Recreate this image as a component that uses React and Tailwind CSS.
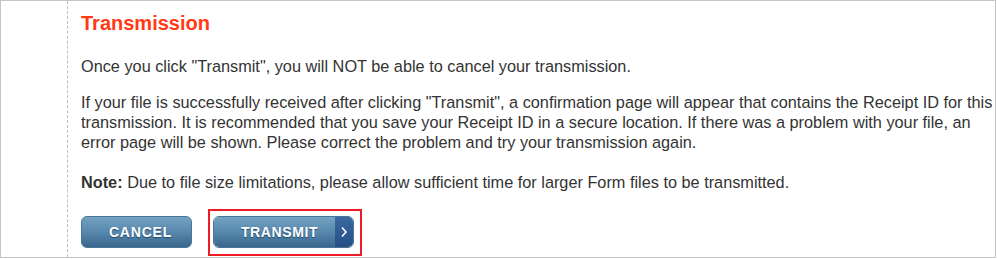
import React from "react";

function Chevron() {
  return (
    <svg width="8" height="12" viewBox="0 0 8 12" aria-hidden="true">
      <polyline points="2,1.5 6,6 2,10.5" fill="none" stroke="white" strokeWidth="1.6" />
    </svg>
  );
}

export default function App() {
  return (
    <div className="w-[997px] h-[259px] bg-white font-['Liberation_Sans',Arial,sans-serif]">
      <div className="flex w-[996px] h-[258px] border border-[#c4c4c4] overflow-hidden">
        <div className="w-[67px] shrink-0 border-r border-dashed border-[#bdbdbd]" />
        <div className="flex-1 pl-[13px] pt-[10px] text-[16.3px] leading-[20px] text-[#333333] whitespace-nowrap">
          <h2 className="text-[20px] leading-[24px] font-bold text-[#ff3a14]">Transmission</h2>

          <p className="mt-[21px]">
            Once you click "Transmit", you will NOT be able to cancel your transmission.
          </p>

          <p className="mt-[16px]">
            If your file is successfully received after clicking "Transmit", a confirmation page will appear that contains the Receipt ID for this
            <br />
            transmission. It is recommended that you save your Receipt ID in a secure location. If there was a problem with your file, an
            <br />
            error page will be shown. Please correct the problem and try your transmission again.
          </p>

          <p className="mt-[20px]">
            <span className="font-bold">Note:</span> Due to file size limitations, please allow sufficient time for larger Form files to be transmitted.
          </p>

          <div className="flex items-start mt-[17px]">
            <button className="mt-[7px] w-[111px] h-[32px] pl-[8px] rounded-[6px] border border-[#4a7598] bg-gradient-to-b from-[#74a3c0] via-[#5788ad] to-[#3a668e] text-white font-bold text-[14px] tracking-[0.8px] [text-shadow:0_1px_1px_#23476a]">
              CANCEL
            </button>

            <div className="ml-[16px] border-2 border-[#ee1c25] pl-[3px] pr-[6px] pt-[5px] pb-[6px]">
              <button className="flex w-[141px] h-[32px] rounded-[6px] overflow-hidden border border-[#4a7598] text-white font-bold text-[14px] tracking-[0.6px]">
                <span className="flex-1 flex items-center justify-center pl-[10px] bg-gradient-to-b from-[#74a3c0] via-[#5788ad] to-[#3a668e] [text-shadow:0_1px_1px_#23476a]">
                  TRANSMIT
                </span>
                <span className="w-[18px] flex items-center justify-center bg-gradient-to-b from-[#3a68a0] to-[#274f86]">
                  <Chevron />
                </span>
              </button>
            </div>
          </div>
        </div>
      </div>
    </div>
  );
}
